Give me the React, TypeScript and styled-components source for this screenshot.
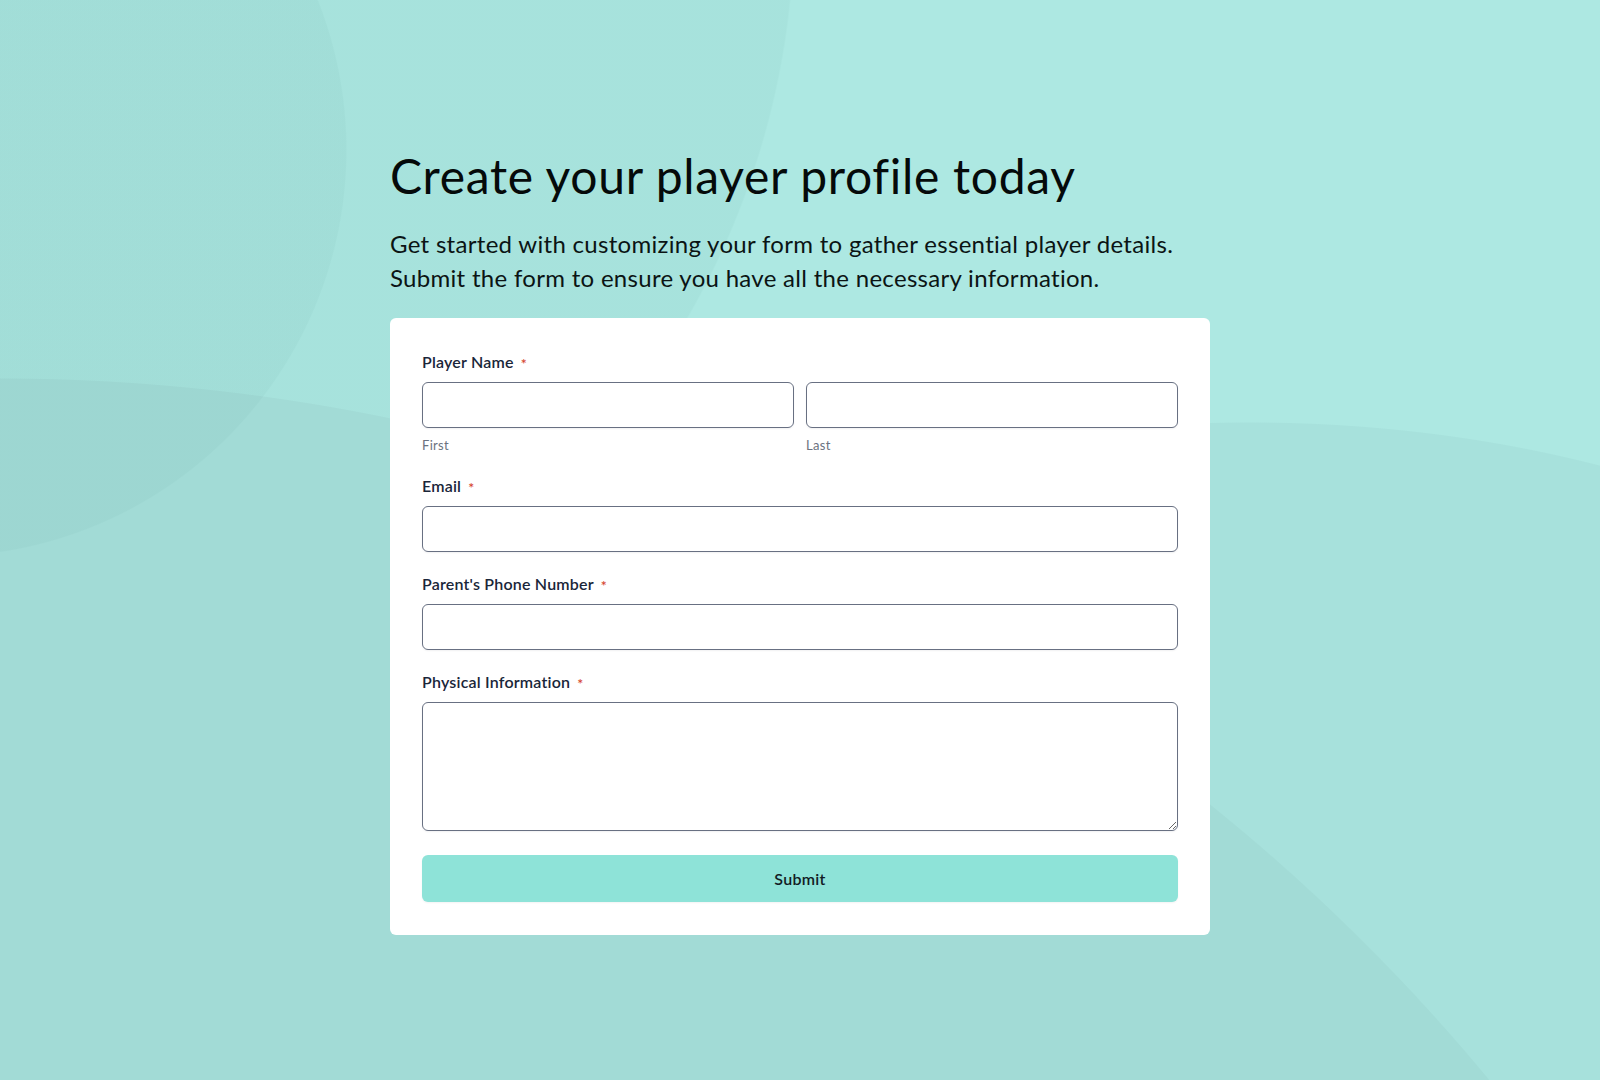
import styled, { createGlobalStyle } from "styled-components";

const GlobalStyle = createGlobalStyle`
  html, body {
    margin: 0;
    padding: 0;
  }
  body {
    font-family: Lato, "Noto Sans", sans-serif;
    color: #0b1414;
  }
  * {
    box-sizing: border-box;
  }
`;

interface FieldProps {
  label: string;
  required?: boolean;
}

function FieldLabel({ label, required = true }: FieldProps) {
  return (
    <Label>
      {label}
      {required && <Star>*</Star>}
    </Label>
  );
}

export default function App() {
  return (
    <Page>
      <GlobalStyle />
      <Column>
        <Title>Create your player profile today</Title>
        <Intro>
          Get started with customizing your form to gather essential player
          details.
          <br />
          Submit the form to ensure you have all the necessary information.
        </Intro>
        <Card onSubmit={(e) => e.preventDefault()}>
          <Field>
            <FieldLabel label="Player Name" />
            <NameRow>
              <div>
                <Input type="text" />
                <SubLabel>First</SubLabel>
              </div>
              <div>
                <Input type="text" />
                <SubLabel>Last</SubLabel>
              </div>
            </NameRow>
          </Field>
          <Field>
            <FieldLabel label="Email" />
            <Input type="email" />
          </Field>
          <Field>
            <FieldLabel label="Parent's Phone Number" />
            <Input type="tel" />
          </Field>
          <Field $last>
            <FieldLabel label="Physical Information" />
            <TextArea />
          </Field>
          <SubmitButton type="submit">Submit</SubmitButton>
        </Card>
      </Column>
    </Page>
  );
}

// soft overlapping blobs behind the form
const Page = styled.div`
  min-height: 100vh;
  overflow: hidden;
  background-color: #ade8e2;
  background-image:
    radial-gradient(
      circle 407px at -60px 150px,
      rgba(20, 90, 85, 0.035) 99.7%,
      transparent 100%
    ),
    radial-gradient(
      circle 1932px at 0px 2310px,
      #a2dbd6 99.95%,
      transparent 100%
    ),
    radial-gradient(
      ellipse 860px 498px at 1250px 920px,
      #a7e1dc 99.8%,
      transparent 100%
    ),
    radial-gradient(
      circle 795px at 0px -80px,
      rgba(20, 90, 85, 0.04) 99.8%,
      transparent 100%
    );
  background-repeat: no-repeat;
`;

const Column = styled.main`
  width: 820px;
  margin: 0 auto;
  padding: 147px 0 80px;
`;

const Title = styled.h1`
  margin: 0 0 22px;
  font-size: 48px;
  font-weight: 400;
  line-height: 1.2;
  letter-spacing: 0.68px;
  color: #050a0a;
`;

const Intro = styled.p`
  margin: 0 0 23px;
  font-size: 24px;
  line-height: 34px;
  letter-spacing: 0.3px;
  color: #0b1414;
`;

const Card = styled.form`
  background: #ffffff;
  border-radius: 6px;
  padding: 32px 32px 33px;
`;

const Field = styled.div<{ $last?: boolean }>`
  margin-bottom: ${({ $last }) => ($last ? "24px" : "20px")};
`;

const Label = styled.label`
  display: block;
  height: 24px;
  margin-bottom: 8px;
  font-size: 16px;
  font-weight: 600;
  line-height: 24px;
  letter-spacing: 0.2px;
  color: #1a2639;
`;

const Star = styled.span`
  margin-left: 7px;
  font-size: 14px;
  line-height: 0;
  color: #d5452f;
  vertical-align: -1px;
`;

const NameRow = styled.div`
  display: grid;
  grid-template-columns: 1fr 1fr;
  gap: 12px;
`;

const Input = styled.input`
  display: block;
  width: 100%;
  height: 46px;
  padding: 0 12px;
  border: 1px solid #687082;
  border-radius: 6px;
  background: #fff;
  box-shadow: 0 1px 2px rgba(16, 24, 40, 0.06);
  font-family: inherit;
  font-size: 16px;
  outline: none;
`;

const TextArea = styled.textarea`
  display: block;
  width: 100%;
  height: 129px;
  padding: 10px 12px;
  border: 1px solid #687082;
  border-radius: 6px;
  background: #fff;
  box-shadow: 0 1px 2px rgba(16, 24, 40, 0.06);
  font-family: inherit;
  font-size: 16px;
  resize: vertical;
  outline: none;
`;

const SubLabel = styled.div`
  margin-top: 8px;
  font-size: 13px;
  line-height: 18px;
  letter-spacing: 0.3px;
  color: #6b7280;
`;

const SubmitButton = styled.button`
  display: block;
  width: 100%;
  height: 47px;
  border: none;
  border-radius: 6px;
  background: #8ee3d8;
  box-shadow: 0 1px 2px rgba(16, 24, 40, 0.05);
  font-family: inherit;
  font-size: 16px;
  font-weight: 600;
  letter-spacing: 0.3px;
  color: #121c24;
  cursor: pointer;
`;
